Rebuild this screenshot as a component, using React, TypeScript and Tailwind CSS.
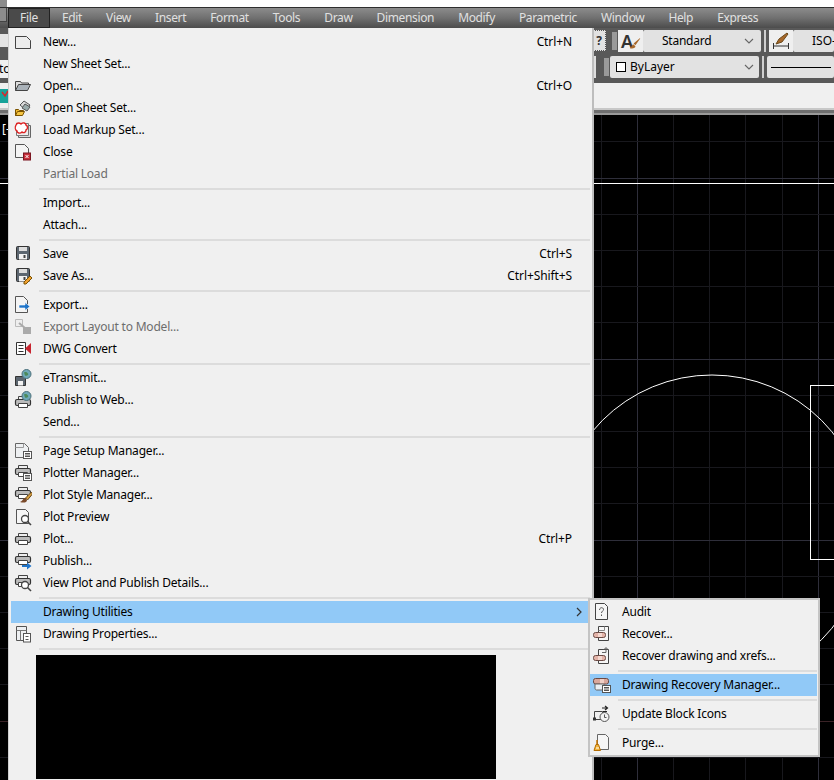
const font = { fontFamily: "'Noto Sans', 'Liberation Sans', sans-serif" };

const Doc = ({ x = 1, y = 1, w = 11, h = 14 }: any) => (
  <path
    d={`M${x + 0.5} ${y + 0.5}h${w - 4}l4 4v${h - 4}h-${w}z`}
    fill="#f4f4f4"
    stroke="#555"
  />
);
const Printer = ({ y = 3 }: any) => (
  <g>
    <path d={`M4.5 ${y + 0.5}h9v3h-9z`} fill="#eee" stroke="#444" />
    <rect x="1.5" y={y + 3.5} width="15" height="6" rx="1.5" fill="#bbb" stroke="#333" strokeWidth="1.2" />
    <path d={`M4.5 ${y + 7.5}h9v4h-9z`} fill="#fff" stroke="#444" />
  </g>
);
const Floppy = () => (
  <g>
    <rect x="2.5" y="1.5" width="13" height="13" rx="1" fill="#5c6670" stroke="#333" />
    <rect x="5" y="2" width="8" height="4" fill="#ddd" />
    <rect x="5" y="9" width="8" height="5.5" fill="#f2f2f2" />
    <rect x="9.5" y="10" width="2" height="3" fill="#444" />
  </g>
);
const List = () => (
  <g>
    <rect x="9.5" y="9.5" width="8" height="7" fill="#fff" stroke="#555" />
    <path d="M11 11.5h5M11 13h5M11 14.5h5" stroke="#555" />
  </g>
);
const Lens = () => (
  <g fill="none" stroke="#444">
    <circle cx="11" cy="11" r="3.5" fill="#fff" strokeWidth="1.3" />
    <path d="M13.5 13.5l3.5 3.5" strokeWidth="1.6" />
  </g>
);
const Globe = () => (
  <g>
    <circle cx="12.5" cy="5" r="4.5" fill="#6fa9b8" stroke="#4b6f7a" />
    <path d="M10 3.5c2-1 3 0 4 1s-1 3-3 2z" fill="#4d8a5a" />
  </g>
);
const Eraser = ({ y = 8 }: any) => (
  <g>
    <rect x="0.5" y={y + 0.5} width="12" height="5" rx="2" fill="#e3b3a8" stroke="#6b4a44" />
    <rect x="5" y={y + 1} width="4" height="4" fill="#f4d8d0" />
  </g>
);

const icons: any = {
  new: <path d="M1.5 3.5h11l4 4v8h-15z" fill="#ececec" stroke="#444" />,
  open: (
    <g stroke="#444">
      <path d="M1.5 13.5v-9h5l1 1.5h7v2" fill="#ddd" />
      <path d="M1.5 13.5l3-6h12l-3 6z" fill="#a9b1b8" />
    </g>
  ),
  sheetset: (
    <g>
      <path d="M6 6l4-4 6 4-4 5z" fill="#d8d8d8" stroke="#555" />
      <path d="M8 9l3-4 5 3-3 4z" fill="#9aa" stroke="#555" />
      <path d="M1.5 16.5v-6h3l1 1h4v1h-2z" fill="#f0b92c" stroke="#7a5200" />
      <path d="M1.5 16.5l2-4h7l-2 4z" fill="#f5c542" stroke="#7a5200" />
    </g>
  ),
  markup: (
    <g>
      <path d="M4.5 4.5h12v12h-12z" fill="#ddd" stroke="#666" />
      <path d="M2.5 2.5h12v12h-12z" fill="#eee" stroke="#777" />
      <path d="M2 4c1-3 4-2 5-1 2-2 5-1 5 1 2 1 2 4 0 5 0 3-3 3-4 2-2 2-5 1-5-1-2-1-2-4-1-6z" fill="#fff" stroke="#d22" strokeWidth="1.4" />
    </g>
  ),
  close: (
    <g>
      <Doc x={1} y={1} w={13} h={13} />
      <rect x="9.5" y="10" width="7" height="7" fill="#c62f3a" stroke="#7a1520" />
      <path d="M11.5 12l3 3m0-3l-3 3" stroke="#fff" />
    </g>
  ),
  save: <Floppy />,
  saveas: (
    <g>
      <Floppy />
      <path d="M10 15l6-6 2 2-6 6h-2z" fill="#f0a030" stroke="#7a5200" />
    </g>
  ),
  export: (
    <g>
      <Doc x={1} y={0} w={12} h={16} />
      <path d="M5 9h6V6.500l5 4-5 4V12H5z" fill="#1f74c9" stroke="#fff" strokeWidth="0.6" />
    </g>
  ),
  exportoff: (
    <g>
      <path d="M1.500 1.500h7v7h-7z" fill="#eee" stroke="#bbb" />
      <path d="M5 5l6 5" stroke="#aaa" strokeWidth="2" />
      <rect x="9" y="9" width="8" height="7" fill="#aaa" />
    </g>
  ),
  dwg: (
    <g>
      <path d="M2.500 2.500h9v12h-9z" fill="#fff" stroke="#333" />
      <path d="M4.500 5.500h5M4.500 8.500h5M4.500 11.500h5" stroke="#333" />
      <path d="M17 3v11l-6-5.500z" fill="#c8242f" />
    </g>
  ),
  etransmit: (
    <g>
      <path d="M1.500 7.500h10v9h-10z" fill="#5c6670" stroke="#333" />
      <rect x="4" y="12" width="5" height="4.500" fill="#f2f2f2" />
      <Globe />
    </g>
  ),
  web: (
    <g>
      <Printer y={5} />
      <Globe />
    </g>
  ),
  pagesetup: (
    <g>
      <path d="M1.500 1.500h9l4 4v10h-13z" fill="#eef0f2" stroke="#666" />
      <path d="M1.500 5.500h8v-4" fill="none" stroke="#999" />
      <List />
    </g>
  ),
  plotter: (
    <g>
      <Printer y={1} />
      <List />
    </g>
  ),
  plotstyle: (
    <g>
      <Printer y={1} />
      <path d="M17.500 6l-6 6 2 2 5-6z" fill="#d8a040" stroke="#6b4a1c" />
      <path d="M11 12c-2 0-2 3-5 4 3 1 7 1 7-2z" fill="#7a4a2a" />
    </g>
  ),
  preview: (
    <g>
      <path d="M2.500 1.500h9l3 3v11h-12z" fill="#f6f6f6" stroke="#555" />
      <Lens />
    </g>
  ),
  plot: <Printer y={3} />,
  publish: (
    <g>
      <Printer y={1} />
      <path d="M8 13h5v-2.500l4.500 3.500-4.500 3.500V15H8z" fill="#1f74c9" />
    </g>
  ),
  details: (
    <g>
      <Printer y={1} />
      <Lens />
    </g>
  ),
  props: (
    <g>
      <path d="M2.500 1.500h10v14h-10z" fill="#eef0f2" stroke="#555" />
      <path d="M2.500 5.500h10M6.500 5.500v10" stroke="#777" />
      <rect x="9.500" y="8.500" width="7" height="8.500" fill="#fff" stroke="#555" />
      <path d="M11.500 11.500h3M11.500 14.500h3" stroke="#555" />
    </g>
  ),
  audit: (
    <g>
      <path d="M2.500 0.500h9l3 3v13h-12z" fill="#f6f6f6" stroke="#444" />
      <path d="M6.500 7c0-3 4-3 4-.5 0 1.800-2 1.500-2 3.500M8.500 11.500v1.500" fill="none" stroke="#555" />
    </g>
  ),
  recover: (
    <g>
      <path d="M5.500 1.500h10v14h-10z" fill="#f6f6f6" stroke="#444" />
      <path d="M5.500 5.500h6v-4" fill="none" stroke="#888" />
      <Eraser y={7} />
    </g>
  ),
  recoverx: (
    <g>
      <path d="M5.500 2.500h10v14h-10z" fill="#f6f6f6" stroke="#444" />
      <path d="M9 5.500h4V1M11 2.500l2-2 2 2" fill="none" stroke="#666" />
      <Eraser y={8} />
    </g>
  ),
  manager: (
    <g>
      <rect x="0.500" y="2.500" width="15" height="5.500" rx="2" fill="#d9a79c" stroke="#6b4a44" />
      <rect x="7" y="3" width="4" height="4.500" fill="#f0cfc6" />
      <path d="M2 8h9v6H3.500C2.500 14 2 13 2 12z" fill="#e9eef3" stroke="#666" />
      <List />
    </g>
  ),
  update: (
    <g>
      <path d="M1.500 6.500h8v8h-8z" fill="none" stroke="#444" />
      <rect x="0" y="12.500" width="3" height="3" fill="#333" />
      <circle cx="11.500" cy="12" r="4.500" fill="#f2f2f2" stroke="#555" />
      <path d="M11.500 9.500v3h2" fill="none" stroke="#555" />
      <path d="M9 3h5M12 1l2.500 2L12 5M14 6.500h-4" fill="none" stroke="#222" strokeWidth="1.200" />
    </g>
  ),
  purge: (
    <g>
      <path d="M4.500 0.500h8l3 3v12h-11z" fill="#f6f6f6" stroke="#666" />
      <path d="M4 6v5" stroke="#c77400" strokeWidth="1.500" />
      <path d="M1 16.500l2-6h2.500l2 6z" fill="#f3b53a" stroke="#b36b00" />
      <path d="M3 14h3" stroke="#fff" />
    </g>
  ),
};

const Icon = ({ name, className }: any) => (
  <svg viewBox="0 0 18 18" className={className}>
    {icons[name]}
  </svg>
);

const MenuRow = ({ icon, label, shortcut, disabled, active, arrow }: any) => (
  <div className={`relative flex h-[22px] items-center ${active ? "bg-[#91c9f7]" : ""}`}>
    <div className="flex w-[32px] shrink-0 justify-start pl-[3px]">
      {icon && <Icon name={icon} className="h-[18px] w-[18px]" />}
    </div>
    <span className={`pb-px text-[12px] tracking-[-0.2px] ${disabled ? "text-[#6d6d6d]" : "text-black"}`}>{label}</span>
    {shortcut && <span className="ml-auto pr-[18px] pb-px text-[12px] tracking-[-0.1px] text-black">{shortcut}</span>}
    {arrow && (
      <svg viewBox="0 0 8 10" className="mr-[7px] ml-auto h-[10px] w-[8px]">
        <path d="M2 1l4 4-4 4" fill="none" stroke="#333" strokeWidth="1.200" />
      </svg>
    )}
  </div>
);

const Sep = () => (
  <div className="flex h-[7px] items-center pl-[28px]">
    <div className="h-[2px] w-full bg-[#dcdcdc]" />
  </div>
);

const menuGroups: any[][] = [
  [
    { icon: "new", label: "New...", shortcut: "Ctrl+N" },
    { label: "New Sheet Set..." },
    { icon: "open", label: "Open...", shortcut: "Ctrl+O" },
    { icon: "sheetset", label: "Open Sheet Set..." },
    { icon: "markup", label: "Load Markup Set..." },
    { icon: "close", label: "Close" },
    { label: "Partial Load", disabled: true },
  ],
  [{ label: "Import..." }, { label: "Attach..." }],
  [
    { icon: "save", label: "Save", shortcut: "Ctrl+S" },
    { icon: "saveas", label: "Save As...", shortcut: "Ctrl+Shift+S" },
  ],
  [
    { icon: "export", label: "Export..." },
    { icon: "exportoff", label: "Export Layout to Model...", disabled: true },
    { icon: "dwg", label: "DWG Convert" },
  ],
  [
    { icon: "etransmit", label: "eTransmit..." },
    { icon: "web", label: "Publish to Web..." },
    { label: "Send..." },
  ],
  [
    { icon: "pagesetup", label: "Page Setup Manager..." },
    { icon: "plotter", label: "Plotter Manager..." },
    { icon: "plotstyle", label: "Plot Style Manager..." },
    { icon: "preview", label: "Plot Preview" },
    { icon: "plot", label: "Plot...", shortcut: "Ctrl+P" },
    { icon: "publish", label: "Publish..." },
    { icon: "details", label: "View Plot and Publish Details..." },
  ],
  [
    { label: "Drawing Utilities", active: true, arrow: true },
    { icon: "props", label: "Drawing Properties..." },
  ],
];

const subGroups: any[][] = [
  [
    { icon: "audit", label: "Audit" },
    { icon: "recover", label: "Recover..." },
    { icon: "recoverx", label: "Recover drawing and xrefs..." },
  ],
  [{ icon: "manager", label: "Drawing Recovery Manager...", active: true }],
  [{ icon: "update", label: "Update Block Icons" }],
  [{ icon: "purge", label: "Purge..." }],
];

const menuBar = ["File", "Edit", "View", "Insert", "Format", "Tools", "Draw", "Dimension", "Modify", "Parametric", "Window", "Help", "Express"];

const Grip = () => (
  <div className="mx-[1px] h-[18px] w-[5px] bg-[radial-gradient(#1c1c1c_40%,#9a9a9a_45%)] bg-[length:2px_2px]" />
);

const Chevron = () => (
  <svg viewBox="0 0 10 6" className="h-[6px] w-[10px]">
    <path d="M1 1l4 4 4-4" fill="none" stroke="#666" strokeWidth="1.100" />
  </svg>
);

const GridCanvas = () => {
  const xs = [601, 637, 673, 709, 745, 782, 818];
  const ys = [141, 178, 214, 250, 286, 322, 359, 395, 431, 467, 503, 540, 576, 612, 648, 684, 721, 757];
  return (
    <svg className="block h-full w-full" viewBox="0 115 834 665" shapeRendering="crispEdges">
      {xs.map((x) => (
        <path key={x} d={`M${x + 0.5} 115V780`} stroke={x === 637 || x === 818 ? "#2e2e3a" : "#18181d"} />
      ))}
      {ys.map((y) => (
        <path
          key={y}
          d={`M0 ${y + 0.5}H834`}
          stroke={y === 178 || y === 359 || y === 540 ? "#2e2e3a" : y === 721 ? "#3a2226" : "#18181d"}
        />
      ))}
      <path d="M0 183.500H834" stroke="#fff" />
      <rect x="810.500" y="385.500" width="60" height="174" fill="none" stroke="#fff" />
      <circle cx="712" cy="530" r="155" fill="none" stroke="#fff" shapeRendering="auto" />
    </svg>
  );
};

export default function App() {
  return (
    <div className="relative h-[780px] w-[834px] overflow-hidden bg-black" style={font}>
      <div className="flex h-[7px] bg-white">
        <div className="w-[7px] bg-[#8c8c8c]" />
      </div>
      {/* menu bar */}
      <div className="flex h-[21px] border-t border-[#2e2e2e] bg-gradient-to-b from-[#8c8c8c] via-[#707070] to-[#4c4c4c]">
        <div className="mr-px h-[14px] w-[7px] border-r border-b border-[#444] bg-[#8c8c8c]" />
        {menuBar.map((m, i) => (
          <div
            key={m}
            className={`flex items-center text-[12px] tracking-[-0.35px] text-[#e0e0e0] ${i === 0 ? "w-[42px] justify-center border border-[#222] bg-[#4a4a4a]" : "px-[12px]"}`}
          >
            {m}
          </div>
        ))}
      </div>
      {/* toolbars */}
      <div className="flex h-[25px] items-center justify-between bg-[#595959]">
        <div className="h-[13px] w-[8px] bg-[#e4e4e4]" />
        <div className="flex h-[22px] items-center">
          <div className="mr-[5px] flex h-[21px] w-[14px] items-center justify-center border border-dotted border-[#555] bg-[#e2e2e2] text-[12px] font-bold text-[#333]">?</div>
          <Grip />
          <div className="relative flex h-[22px] w-[25px] items-center justify-start bg-[#efefef] pl-[3px] text-[18px] leading-none font-semibold text-[#333]">
            A
            <svg viewBox="0 0 14 14" className="absolute right-[2px] bottom-[2px] h-[13px] w-[13px]">
              <path d="M13 1L6 7l2 2 5-7zM6 8c-2 0-2 3-4 4 3 1 6 0 6-2z" fill="#a9682a" />
            </svg>
          </div>
          <div className="flex h-[22px] w-[118px] items-center justify-between rounded-[2px] bg-[#e2e2e2] pr-[7px] pl-[18px] text-[12px] tracking-[-0.25px] text-black">
            <span className="ml-[1px]">Standard</span>
            <Chevron />
          </div>
          <div className="mx-[3px] h-[22px] w-[2px] bg-[#cfcfcf]" />
          <div className="flex h-[22px] w-[24px] items-center justify-center bg-[#efefef]">
            <svg viewBox="0 0 18 18" className="h-[18px] w-[18px]">
              <path d="M1.500 11v6M16.500 11v6M1.500 14h15" stroke="#333" fill="none" />
              <path d="M4 12l3-5 8-6 1 1-6 8z" fill="#a9682a" stroke="#6b4a1c" />
            </svg>
          </div>
          <div className="flex h-[22px] w-[41px] items-center rounded-[2px] bg-[#e2e2e2] pl-[19px] text-[12px] whitespace-nowrap text-black">
            ISO-
          </div>
        </div>
      </div>
      <div className="flex h-[30px] items-start justify-between bg-[#595959]">
        <div className="mt-[7px] h-[18px] w-[8px] bg-[#f0f0f0] text-[12px] leading-[18px] text-black">
          <span className="ml-[-1px]">to</span>
        </div>
        <div className="mt-[3px] flex h-[22px] items-center">
          <div className="mr-[7px] h-[22px] w-[4px] bg-[#dedede]" />
          <Grip />
          <div className="flex h-[22px] w-[149px] items-center justify-between rounded-[2px] bg-[#e2e2e2] pr-[5px] pl-[6px] text-[12px] text-black">
            <span className="flex items-center gap-[4px]">
              <span className="h-[10px] w-[10px] border border-black bg-white" />
              ByLayer
            </span>
            <Chevron />
          </div>
          <div className="mx-[3px] h-[22px] w-[2px] bg-[#cfcfcf]" />
          <div className="flex h-[22px] w-[67px] items-center rounded-[2px] bg-[#e2e2e2] pl-[4px]">
            <div className="h-px w-[60px] bg-black" />
          </div>
        </div>
      </div>
      <div className="flex h-[25px] items-center bg-[#f0f0f0]">
        <div className="relative h-[14px] w-[8px] bg-[#17a39a]">
          <svg viewBox="0 0 8 14" className="absolute top-0 left-0 h-[14px] w-[8px]">
            <path d="M2 3l3 4 3-5" fill="none" stroke="#d8262c" strokeWidth="1.500" />
          </svg>
        </div>
      </div>
      <div className="h-[2px] bg-[#c8c8c8]" />
      <div className="h-[3px] bg-[#6e6e6e]" />
      <div className="h-[2px] bg-[#9a9a9a]" />
      <div className="h-[665px]">
        <GridCanvas />
      </div>

      {/* left edge text on the canvas */}
      <div className="absolute top-[120px] left-[2px] text-[12px] text-white">[-</div>

      {/* file menu */}
      <div className="absolute top-[28px] left-[8px] h-[752px] w-[586px] border-r-2 border-l border-r-[#bdbdbd] border-l-[#cfcfcf] bg-[#f0f0f0] pt-[3px]">
        <div className="pr-[2px] pl-[2px]">
          {menuGroups.map((g, i) => (
            <div key={i}>
              {i > 0 && <Sep />}
              {g.map((r) => (
                <MenuRow key={r.label} {...r} />
              ))}
            </div>
          ))}
          <Sep />
        </div>
        <div className="mt-[3px] ml-[27px] h-[124px] w-[460px] bg-black" />
      </div>

      {/* submenu */}
      <div className="absolute top-[598px] left-[588px] h-[159px] w-[232px] border-2 border-[#c4c4c4] bg-[#f0f0f0] pt-px pr-px">
        {subGroups.map((g, i) => (
          <div key={i}>
            {i > 0 && <Sep />}
            {g.map((r) => (
              <MenuRow key={r.label} {...r} />
            ))}
          </div>
        ))}
      </div>
    </div>
  );
}
